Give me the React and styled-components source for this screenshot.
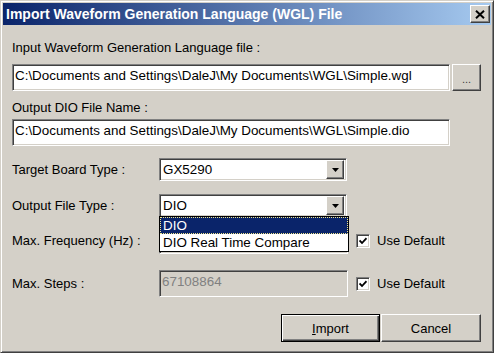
import React from 'react'
import styled, { createGlobalStyle, css } from 'styled-components'

const Global = createGlobalStyle`
  html, body {
    margin: 0;
    padding: 0;
    background: #d4d0c8;
  }
  * { box-sizing: border-box; }
`

const sunken = css`
  border: 1px solid;
  border-color: #808080 #ffffff #ffffff #808080;
  box-shadow: inset 1px 1px #404040, inset -1px -1px #d4d0c8;
`

const raised = css`
  border: 1px solid;
  border-color: #ffffff #404040 #404040 #ffffff;
  box-shadow: inset -1px -1px #808080, inset 1px 1px #d4d0c8;
`

const Window = styled.div`
  width: 494px;
  height: 353px;
  padding: 2px;
  background: #d4d0c8;
  border: 1px solid;
  border-color: #d4d0c8 #404040 #404040 #d4d0c8;
  box-shadow: inset 1px 1px #ffffff, inset -1px -1px #808080;
  font-family: "Liberation Sans", Arial, sans-serif;
  color: #000;
  display: flex;
  flex-direction: column;
`

const TitleBar = styled.div`
  height: 22px;
  display: flex;
  align-items: center;
  justify-content: space-between;
  padding: 0 1px 0 3px;
  background: linear-gradient(to right, #0a246a, #a6caf0);
`

const Title = styled.span`
  color: #fff;
  font-weight: bold;
  font-size: 14px;
`

const CloseButton = styled.div`
  width: 20px;
  height: 18px;
  background: #d4d0c8;
  ${raised};
  display: flex;
  align-items: center;
  justify-content: center;
`

const Body = styled.div`
  padding: 15px 10px 0 9px;
  display: flex;
  flex-direction: column;
`

const Label = styled.div`
  font-size: 13px;
  line-height: 16px;
  margin-top: ${p => p.$mt || 0}px;
`

const Row = styled.div`
  display: flex;
  align-items: center;
  gap: ${p => p.$gap || 0}px;
  margin-top: ${p => p.$mt || 0}px;
`

const FormRow = styled.div`
  display: grid;
  grid-template-columns: 147px auto auto 1fr;
  align-items: center;
  margin-top: ${p => p.$mt || 0}px;
`

const Field = styled.div`
  width: ${p => p.$w}px;
  height: ${p => p.$h || 27}px;
  ${sunken};
  background: ${p => (p.$disabled ? '#d4d0c8' : '#ffffff')};
  color: ${p => (p.$disabled ? '#808080' : '#000')};
  font-size: 13.4px;
  line-height: 16px;
  padding: 3px 2px 0 2px;
  white-space: nowrap;
  overflow: hidden;
`

const BrowseButton = styled.div`
  width: 29px;
  height: 27px;
  background: #d4d0c8;
  ${raised};
  font-size: 11px;
  color: #404040;
  display: flex;
  align-items: center;
  justify-content: center;
  padding-top: 3px;
`

const SelectBox = styled.div`
  position: relative;
  width: 188px;
  height: 23px;
  ${sunken};
  background: #fff;
  display: flex;
  align-items: center;
  padding: 2px 2px 2px 3px;
  font-size: 13.4px;
`

const SelectText = styled.span`
  flex: 1;
  line-height: 16px;
`

const ArrowButton = styled.div`
  width: 18px;
  height: 19px;
  background: #d4d0c8;
  ${raised};
  display: flex;
  align-items: center;
  justify-content: center;
`

const DropList = styled.div`
  position: absolute;
  top: 100%;
  left: -1px;
  width: 190px;
  border: 1px solid #000;
  background: #fff;
  z-index: 2;
  font-size: 13.4px;
`

const DropItem = styled.div`
  height: 17px;
  line-height: 15px;
  padding: 0 2px;
  background: ${p => (p.$active ? '#0a246a' : '#fff')};
  color: ${p => (p.$active ? '#fff' : '#000')};
  border: 1px dotted ${p => (p.$active ? '#f0e68c' : 'transparent')};
`

const CheckWrap = styled.label`
  display: flex;
  align-items: center;
  gap: 7px;
  margin-left: 8px;
  font-size: 13px;
`

const CheckBox = styled.span`
  width: 14px;
  height: 14px;
  ${sunken};
  background: #fff;
  display: flex;
  align-items: center;
  justify-content: center;
`

const ButtonBar = styled.div`
  display: flex;
  justify-content: flex-end;
  gap: 1px;
  margin-top: 17px;
`

const PushButton = styled.div`
  width: ${p => p.$w || 99}px;
  height: 28px;
  background: #d4d0c8;
  font-size: 13px;
  display: flex;
  align-items: center;
  justify-content: center;
  ${p =>
    p.$default
      ? css`
          border: 1px solid #000;
          box-shadow: inset 1px 1px #ffffff, inset -1px -1px #404040, inset -2px -2px #808080;
        `
      : raised};
`

const Arrow = () => (
  <svg width="7" height="4" viewBox="0 0 7 4">
    <path d="M0 0h7L3.5 4z" fill="#000" />
  </svg>
)

const Check = () => (
  <svg width="8" height="8" viewBox="0 0 8 8">
    <path d="M0.5 3.5 L3 6 L7.5 1.2" stroke="#000" strokeWidth="1.8" fill="none" />
  </svg>
)

const Select = ({ value, options }) => (
  <SelectBox>
    <SelectText>{value}</SelectText>
    <ArrowButton>
      <Arrow />
    </ArrowButton>
    {options && (
      <DropList>
        {options.map(o => (
          <DropItem key={o} $active={o === value}>
            {o}
          </DropItem>
        ))}
      </DropList>
    )}
  </SelectBox>
)

const UseDefault = () => (
  <CheckWrap>
    <CheckBox>
      <Check />
    </CheckBox>
    Use Default
  </CheckWrap>
)

export default function App() {
  return (
    <>
      <Global />
      <Window>
        <TitleBar>
          <Title>Import Waveform Generation Language (WGL) File</Title>
          <CloseButton>
            <svg width="10" height="9" viewBox="0 0 10 9">
              <path d="M1 0.8 L9 8.2 M9 0.8 L1 8.2" stroke="#000" strokeWidth="2" />
            </svg>
          </CloseButton>
        </TitleBar>
        <Body>
          <Label>Input Waveform Generation Language file :</Label>
          <Row $mt={8} $gap={2}>
            <Field $w={438}>C:\Documents and Settings\DaleJ\My Documents\WGL\Simple.wgl</Field>
            <BrowseButton>...</BrowseButton>
          </Row>
          <Label $mt={9}>Output DIO File Name :</Label>
          <Row $mt={3}>
            <Field $w={438}>C:\Documents and Settings\DaleJ\My Documents\WGL\Simple.dio</Field>
          </Row>
          <FormRow $mt={12}>
            <Label>Target Board Type :</Label>
            <Select value="GX5290" />
          </FormRow>
          <FormRow $mt={13}>
            <Label>Output File Type :</Label>
            <Select value="DIO" options={['DIO', 'DIO Real Time Compare']} />
          </FormRow>
          <FormRow $mt={10}>
            <Label>Max. Frequency (Hz) :</Label>
            <Field $w={189}></Field>
            <UseDefault />
          </FormRow>
          <FormRow $mt={16}>
            <Label>Max. Steps :</Label>
            <Field $w={189} $disabled>67108864</Field>
            <UseDefault />
          </FormRow>
          <ButtonBar>
            <PushButton $default>
              <span><u>I</u>mport</span>
            </PushButton>
            <PushButton $w={100}>Cancel</PushButton>
          </ButtonBar>
        </Body>
      </Window>
    </>
  )
}
